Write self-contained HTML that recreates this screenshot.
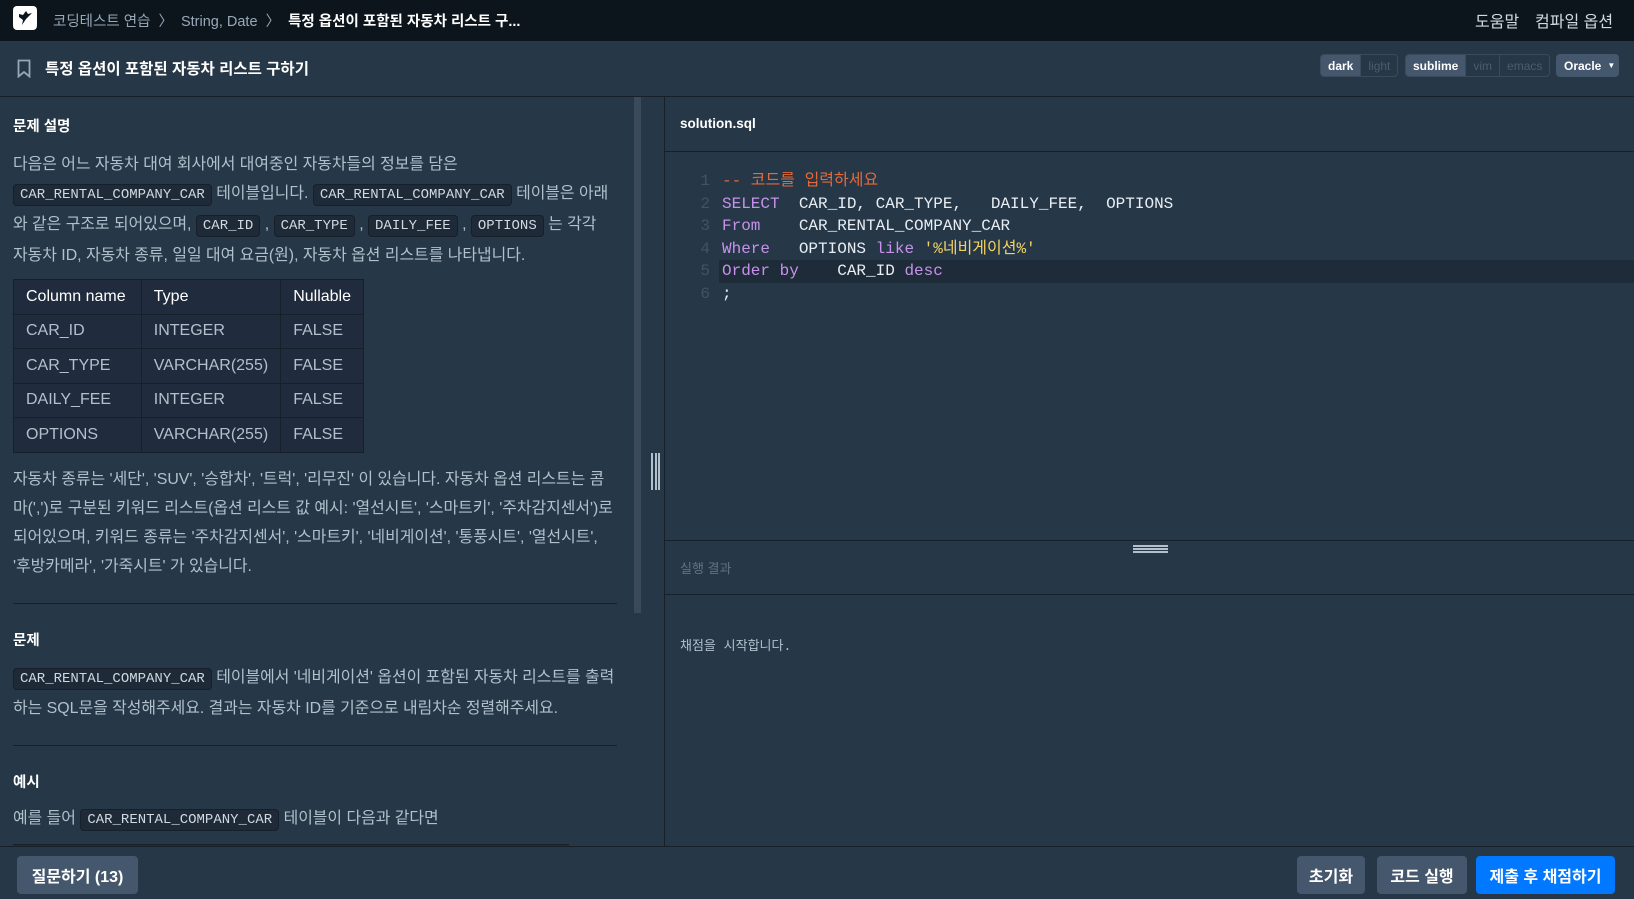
<!DOCTYPE html>
<html><head><meta charset="utf-8"><style>
*{margin:0;padding:0;box-sizing:border-box}
body{width:1634px;height:899px;overflow:hidden;background:#263747;font-family:"Liberation Sans","Noto Sans CJK KR",sans-serif;color:#b2c0cc;position:relative}
.abs{position:absolute}
#top{left:0;top:0;width:1634px;height:41px;background:#0c151c}
#hdr{left:0;top:41px;width:1634px;height:56px;background:#263747;border-bottom:1px solid #172029}
.code{font-family:"Liberation Mono","Noto Sans CJK KR",monospace}
.ic{background:#1e2a37;border:1px solid #172029;border-radius:4px;padding:2px 6px;font-family:"Liberation Mono",monospace;font-size:14px;color:#d0d8e0}
.p{font-size:15.9px;line-height:29px;color:#b2c0cc;left:13px;width:600px}
h4{position:absolute;left:13px;font-size:14.5px;color:#fff;font-weight:bold}
table{border-collapse:collapse;background:#202b3d;font-size:16px}
td{border:1px solid #172029;height:34.5px;padding:0 12px;color:#b2c0cc}
tr:first-child td{color:#fff}
.hr{left:13px;width:604px;height:1px;background:#172029}
.btn{top:856px;height:38px;border-radius:4px;background:#44576c;color:#fff;font-size:16px;font-weight:bold;display:flex;align-items:center;justify-content:center}
.ln{left:690px;width:20px;text-align:right;color:#3f5468;font-size:16px;line-height:22px;height:22px}
.cl{left:722px;font-size:16px;color:#e8eef3;white-space:pre;line-height:22px;height:22px}
.kw{color:#c792ea}
.tg{display:flex;border:1px solid #3b4b5c;border-radius:4px;overflow:hidden;height:23px;font-size:12px}
.tg span{padding:0 7px;display:flex;align-items:center;color:#4b5d70;border-left:1px solid #3b4b5c}
.tg span.on{background:#44576c;color:#fff;font-weight:bold;border-left:none}
</style></head><body>
<div id="top" class="abs">
 <div class="abs" style="left:13px;top:6px;width:24px;height:24px;background:#fff;border-radius:4px">
  <svg width="24" height="24" viewBox="0 0 24 24"><path d="M6 8l4 1 3-4 2 3 4-1-3 3-3 3-4 6 1-5-4-3z" fill="#0c151c"/></svg>
 </div>
 <div class="abs" style="left:53px;top:10px;font-size:14.5px;color:#98a8b9;white-space:nowrap">코딩테스트 연습 <span style="margin:0 4px">〉</span> String, Date <span style="margin:0 4px">〉</span> <b style="color:#fff">특정 옵션이 포함된 자동차 리스트 구...</b></div>
 <div class="abs" style="left:1475px;top:8px;font-size:16px;color:#d0dae3">도움말</div>
 <div class="abs" style="left:1535px;top:8px;font-size:16px;color:#d0dae3">컴파일 옵션</div>
</div>
<div id="hdr" class="abs">
 <svg class="abs" style="left:17px;top:18px" width="14" height="19" viewBox="0 0 14 19"><path d="M1.5 1.5h11v16l-5.5-4.5-5.5 4.5z" fill="none" stroke="#98a8b9" stroke-width="1.8"/></svg>
 <div class="abs" style="left:45px;top:16px;font-size:15.5px;color:#fff;font-weight:bold">특정 옵션이 포함된 자동차 리스트 구하기</div>
 <div class="abs tg" style="left:1320px;top:13px"><span class="on">dark</span><span>light</span></div>
 <div class="abs tg" style="left:1405px;top:13px"><span class="on">sublime</span><span>vim</span><span>emacs</span></div>
 <div class="abs" style="left:1556px;top:13px;width:63px;height:23px;background:#44576c;border-radius:4px;color:#fff;font-size:12px;font-weight:bold;display:flex;align-items:center;padding-left:8px">Oracle <span style="font-size:8px;margin-left:6px">▼</span></div>
</div>
<!-- left -->
<h4 style="top:115px">문제 설명</h4>
<div class="abs p" style="top:150px">다음은 어느 자동차 대여 회사에서 대여중인 자동차들의 정보를 담은 <span class="ic">CAR_RENTAL_COMPANY_CAR</span> 테이블입니다. <span class="ic">CAR_RENTAL_COMPANY_CAR</span> 테이블은 아래와 같은 구조로 되어있으며, <span class="ic">CAR_ID</span> , <span class="ic">CAR_TYPE</span> , <span class="ic">DAILY_FEE</span> , <span class="ic">OPTIONS</span> 는 각각 자동차 ID, 자동차 종류, 일일 대여 요금(원), 자동차 옵션 리스트를 나타냅니다.</div>
<table class="abs" style="left:13px;top:279px;width:351px">
<tr><td style="width:128px">Column name</td><td style="width:139px">Type</td><td>Nullable</td></tr>
<tr><td>CAR_ID</td><td>INTEGER</td><td>FALSE</td></tr>
<tr><td>CAR_TYPE</td><td>VARCHAR(255)</td><td>FALSE</td></tr>
<tr><td>DAILY_FEE</td><td>INTEGER</td><td>FALSE</td></tr>
<tr><td>OPTIONS</td><td>VARCHAR(255)</td><td>FALSE</td></tr>
</table>
<div class="abs p" style="top:465px">자동차 종류는 '세단', 'SUV', '승합차', '트럭', '리무진' 이 있습니다. 자동차 옵션 리스트는 콤마(',')로 구분된 키워드 리스트(옵션 리스트 값 예시: '열선시트', '스마트키', '주차감지센서')로 되어있으며, 키워드 종류는 '주차감지센서', '스마트키', '네비게이션', '통풍시트', '열선시트', '후방카메라', '가죽시트' 가 있습니다.</div>
<div class="abs hr" style="top:603px"></div>
<h4 style="top:629px">문제</h4>
<div class="abs p" style="top:663px;width:606px"><span class="ic">CAR_RENTAL_COMPANY_CAR</span> 테이블에서 '네비게이션' 옵션이 포함된 자동차 리스트를 출력하는 SQL문을 작성해주세요. 결과는 자동차 ID를 기준으로 내림차순 정렬해주세요.</div>
<div class="abs hr" style="top:745px"></div>
<h4 style="top:771px">예시</h4>
<div class="abs p" style="top:804px">예를 들어 <span class="ic">CAR_RENTAL_COMPANY_CAR</span> 테이블이 다음과 같다면</div>
<div class="abs" style="left:13px;top:844px;width:556px;height:4px;background:#202b3d;border-top:1px solid #172029"></div>
<div class="abs" style="left:634px;top:97px;width:7px;height:516px;background:#3a4a5b"></div>
<div class="abs" style="left:651px;top:453px;width:9px;height:37px;border-left:2px solid #b2c0cc;border-right:2px solid #b2c0cc"><div style="margin:0 auto;width:2px;height:37px;background:#b2c0cc"></div></div>
<div class="abs" style="left:664px;top:97px;width:1px;height:750px;background:#172029"></div>
<!-- right -->
<div class="abs" style="left:680px;top:116px;font-size:13.5px;color:#fff;font-weight:bold">solution.sql</div>
<div class="abs" style="left:665px;top:151px;width:969px;height:1px;background:#172029"></div>
<div class="abs" style="left:719px;top:260px;width:915px;height:23px;background:#1e2b38"></div>
<div class="code">
<div class="abs ln" style="top:170px">1</div><div class="abs cl" style="top:170px;color:#e46a39">-- 코드를 입력하세요</div>
<div class="abs ln" style="top:193px">2</div><div class="abs cl" style="top:193px"><span class="kw">SELECT</span>  CAR_ID, CAR_TYPE,   DAILY_FEE,  OPTIONS</div>
<div class="abs ln" style="top:215px">3</div><div class="abs cl" style="top:215px"><span class="kw">From</span>    CAR_RENTAL_COMPANY_CAR</div>
<div class="abs ln" style="top:238px">4</div><div class="abs cl" style="top:238px"><span class="kw">Where</span>   OPTIONS <span class="kw">like</span> <span style="color:#f1d362">'%네비게이션%'</span></div>
<div class="abs ln" style="top:260px">5</div><div class="abs cl" style="top:260px"><span class="kw">Order by</span>    CAR_ID <span class="kw">desc</span></div>
<div class="abs ln" style="top:283px">6</div><div class="abs cl" style="top:283px">;</div>
</div>
<div class="abs" style="left:665px;top:540px;width:969px;height:1px;background:#172029"></div>
<div class="abs" style="left:1133px;top:545px;width:35px;height:8px;border-top:2px solid #b2c0cc;border-bottom:2px solid #b2c0cc"><div style="margin-top:1px;height:2px;background:#b2c0cc"></div></div>
<div class="abs" style="left:680px;top:558px;font-size:13px;color:#5f7388">실행 결과</div>
<div class="abs" style="left:665px;top:594px;width:969px;height:1px;background:#172029"></div>
<div class="abs code" style="left:680px;top:635px;font-size:13px;color:#b2c0cc">채점을 시작합니다.</div>
<!-- bottom -->
<div class="abs" style="left:0;top:846px;width:1634px;height:53px;background:#263747;border-top:1px solid #172029"></div>
<div class="abs btn" style="left:17px;width:121px">질문하기 (13)</div>
<div class="abs btn" style="left:1297px;width:68px">초기화</div>
<div class="abs btn" style="left:1377px;width:90px">코드 실행</div>
<div class="abs btn" style="left:1476px;width:139px;background:#0078ff">제출 후 채점하기</div>
</body></html>
